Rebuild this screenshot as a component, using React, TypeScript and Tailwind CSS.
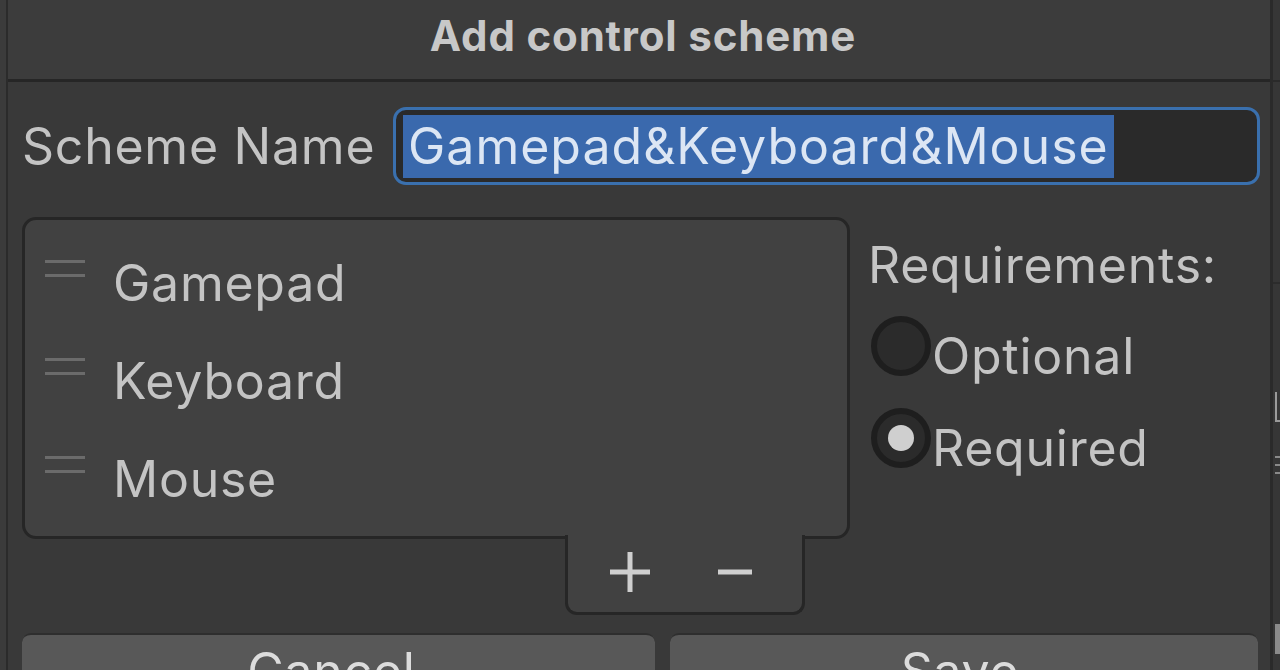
import React from "react";

const font = { fontFamily: "Inter, 'Noto Sans', sans-serif" };

function Handle() {
  return (
    <div className="w-[40px] flex flex-col gap-[11px]">
      <div className="h-[3px] bg-[#6b6b6b]" />
      <div className="h-[3px] bg-[#6b6b6b]" />
    </div>
  );
}

function Item({ label }: { label: string }) {
  return (
    <div className="h-[98px] flex items-start pl-[20px]">
      <div className="pt-[7px]">
        <Handle />
      </div>
      <span className="ml-[28px] text-[50px] leading-[60px] text-[#c4c4c4] tracking-[0.015em]">{label}</span>
    </div>
  );
}

function Radio({ checked, label }: { checked?: boolean; label: string }) {
  return (
    <div className="flex items-center h-[60px]">
      <div className="w-[60px] h-[60px] rounded-full border-[6px] border-[#1e1e1e] bg-[#2b2b2b] flex items-center justify-center shrink-0">
        {checked && <div className="w-[26px] h-[26px] rounded-full bg-[#cfcfcf]" />}
      </div>
      <span className="text-[50px] leading-[60px] text-[#c4c4c4] mt-[19px] ml-[1px] tracking-[0.015em]">{label}</span>
    </div>
  );
}

export default function App() {
  return (
    <div className="w-[1280px] h-[670px] overflow-hidden bg-[#393939] flex" style={font}>
      <div className="w-[8px] bg-[#3b3b3b] border-r-2 border-[#2b2b2b] shrink-0" />
      <div className="flex-1 flex flex-col min-w-0">
        <div className="h-[82px] bg-[#3c3c3c] border-b-[3px] border-[#262626] flex items-center justify-center shrink-0 pb-[8px]">
          <span className="text-[42px] font-bold text-[#c8c8c8] tracking-[0.02em] ml-[8px]">Add control scheme</span>
        </div>
        <div className="flex items-center mt-[25px] pl-[14px] pr-[10px]">
          <span className="text-[50px] leading-[60px] text-[#c4c4c4] w-[371px] shrink-0 tracking-[0.015em]">Scheme Name</span>
          <div className="flex-1 h-[78px] rounded-[13px] border-[3px] border-[#3a70ae] bg-[#2a2a2a] flex items-center pl-[7px]">
            <span className="bg-[#3a69ad] text-[#dce6f4] text-[50px] leading-[63px] px-[5px] tracking-[0.02em]">Gamepad&amp;Keyboard&amp;Mouse</span>
          </div>
        </div>
        <div className="flex mt-[32px] pl-[14px]">
          <div className="w-[828px] shrink-0 flex flex-col">
            <div className="h-[322px] rounded-[14px] border-[3px] border-[#262626] bg-[#414141] pt-[33px]">
              <Item label="Gamepad" />
              <Item label="Keyboard" />
              <Item label="Mouse" />
            </div>
            <div className="ml-[543px] w-[240px] h-[80px] -mt-[4px] bg-[#414141] border-[3px] border-t-0 border-[#262626] rounded-b-[12px] flex items-center pl-[42px] gap-[67px] pb-[4px]">
              <svg width="40" height="42" viewBox="0 0 40 42">
                <path d="M20 1 V41 M0 21 H40" stroke="#cfcfcf" strokeWidth="5" />
              </svg>
              <svg width="36" height="42" viewBox="0 0 36 42">
                <path d="M1 21 H35" stroke="#cfcfcf" strokeWidth="5" />
              </svg>
            </div>
          </div>
          <div className="pl-[18px] flex flex-col">
            <span className="text-[50px] leading-[60px] text-[#c4c4c4] mt-[18px] tracking-[0.015em]">Requirements:</span>
            <div className="ml-[3px] mt-[21px] flex flex-col gap-[32px]">
              <Radio label="Optional" />
              <Radio checked label="Required" />
            </div>
          </div>
        </div>
        <div className="flex gap-[15px] pl-[14px] mt-[18px]">
          <div className="w-[633px] h-[60px] rounded-t-[9px] bg-[#585858] border-t-2 border-[#2e2e2e] flex justify-center pt-[6px]">
            <span className="text-[50px] leading-[60px] text-[#dcdcdc] -ml-[14px] tracking-[0.015em]">Cancel</span>
          </div>
          <div className="w-[588px] h-[60px] rounded-t-[9px] bg-[#585858] border-t-2 border-[#2e2e2e] flex justify-center pt-[6px]">
            <span className="text-[50px] leading-[60px] text-[#dcdcdc] -ml-[8px] tracking-[0.015em]">Save</span>
          </div>
        </div>
      </div>
      <div className="w-[10px] shrink-0 border-l-[3px] border-[#2a2a2a] bg-[#363636] flex flex-col">
        <div className="h-[82px] border-b-2 border-[#2a2a2a]" />
        <div className="mt-[200px] h-[2px] bg-[#2c2c2c]" />
        <div className="mt-[108px] ml-[2px] w-[5px] h-[30px] border-l-2 border-b-2 border-[#9a9a9a]" />
        <div className="mt-[34px] ml-[2px] w-[6px] h-[2px] bg-[#8a8a8a]" />
        <div className="mt-[6px] ml-[2px] w-[6px] h-[2px] bg-[#8a8a8a]" />
        <div className="mt-[6px] ml-[2px] w-[6px] h-[2px] bg-[#8a8a8a]" />
        <div className="mt-[150px] ml-[2px] w-[5px] h-[30px] bg-[#8a8a8a]" />
      </div>
    </div>
  );
}
